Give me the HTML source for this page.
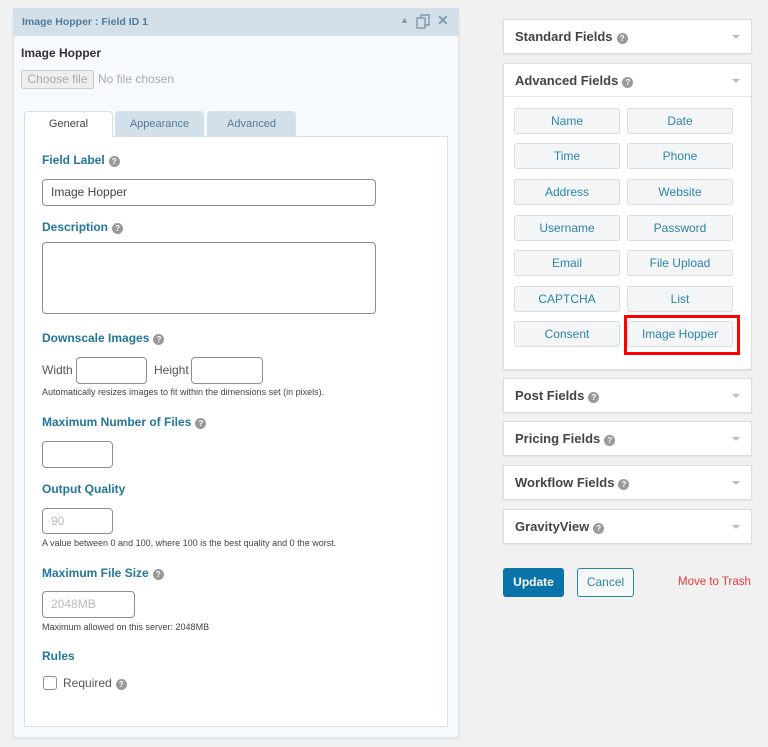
<!DOCTYPE html>
<html><head><style>
*{box-sizing:border-box;margin:0;padding:0}
body{width:768px;height:747px;background:#f1f1f1;font-family:"Liberation Sans",sans-serif;position:relative;overflow:hidden;color:#444}
.a{position:absolute}
.q{display:inline-block;width:11px;height:11px;border-radius:50%;background:#999;color:#fff;font-size:8px;line-height:11px;text-align:center;font-weight:bold;vertical-align:0px;margin-left:4px}
.lbl{position:absolute;left:42px;font-weight:bold;color:#23759b;font-size:12px}
.in{position:absolute;border:1px solid #8c8f94;border-radius:4px;background:#fff;font-size:12px;color:#444;padding-left:8px;line-height:24px}
.sm{position:absolute;left:42px;font-size:9px;color:#444}
.box{position:absolute;left:503px;width:249px;background:#fff;border:1px solid #dcdcde;box-shadow:0 1px 1px rgba(0,0,0,.06)}
.box .h{height:33px;line-height:33px;padding-left:11px;font-weight:bold;font-size:13px;color:#444;position:relative}
.box .h:after{content:"";position:absolute;right:11px;top:15px;border:4px solid transparent;border-top:4px solid #bbb}
.btn{position:absolute;width:106px;height:26px;background:#f3f5f6;border:1px solid #dcdcde;border-radius:3px;color:#2c84ad;font-size:12px;text-align:center;line-height:24px}
.tab{position:absolute;top:111px;height:26px;border:1px solid #d5e2ec;border-bottom:none;border-radius:4px 4px 0 0;background:#d3e0ea;font-size:11px;color:#537a99;text-align:center;line-height:25px}
</style></head><body>
<div class="a" style="left:13px;top:8px;width:446px;height:730px;background:#f6fafd;border:1px solid #dde4ea;box-shadow:0 1px 2px rgba(0,0,0,.08)"></div>
<div class="a" style="left:13px;top:8px;width:446px;height:28px;background:#d3dfe9"></div>
<div class="a" style="left:22px;top:16px;font-size:10.5px;font-weight:bold;color:#517b9b">Image Hopper : Field ID 1</div>
<div class="a" style="left:400px;top:15px;font-size:9px;color:#7f99ae">▲</div>
<svg class="a" style="left:416px;top:14px" width="14" height="16" viewBox="0 0 14 16"><rect x="1" y="4" width="8" height="10" fill="none" stroke="#7f99ae" stroke-width="1.4"/><path d="M5 4V1h8v10h-4" fill="none" stroke="#7f99ae" stroke-width="1.4"/></svg>
<div class="a" style="left:437px;top:12px;font-size:14px;font-weight:bold;color:#7f99ae">✕</div>
<div class="a" style="left:21px;top:46px;font-size:12px;font-weight:bold;color:#333">Image Hopper</div>
<div class="a" style="left:21px;top:70px;width:73px;height:19px;border:1px solid #ccc;border-radius:2px;background:#eee;font-size:12px;color:#aaa;text-align:center;line-height:17px">Choose file</div>
<div class="a" style="left:98px;top:72px;font-size:12px;color:#aaa">No file chosen</div>
<div class="tab" style="left:24px;width:89px;background:#fff;color:#444;height:27px">General</div>
<div class="tab" style="left:115px;width:89px">Appearance</div>
<div class="tab" style="left:207px;width:89px">Advanced</div>
<div class="a" style="left:24px;top:136px;width:424px;height:591px;background:#fff;border:1px solid #d5e2ec"></div>
<div class="a" style="left:25px;top:135px;width:87px;height:3px;background:#fff"></div>
<div class="lbl" style="top:153px">Field Label<span class="q">?</span></div>
<div class="in" style="left:42px;top:179px;width:334px;height:27px">Image Hopper</div>
<div class="lbl" style="top:220px">Description<span class="q">?</span></div>
<div class="in" style="left:42px;top:242px;width:334px;height:72px"></div>
<div class="lbl" style="top:331px">Downscale Images<span class="q">?</span></div>
<div class="a" style="left:42px;top:363px;font-size:12px;color:#555">Width</div>
<div class="in" style="left:76px;top:357px;width:71px;height:27px"></div>
<div class="a" style="left:154px;top:363px;font-size:12px;color:#555">Height</div>
<div class="in" style="left:191px;top:357px;width:72px;height:27px"></div>
<div class="sm" style="top:387px">Automatically resizes images to fit within the dimensions set (in pixels).</div>
<div class="lbl" style="top:415px">Maximum Number of Files<span class="q">?</span></div>
<div class="in" style="left:42px;top:441px;width:71px;height:27px"></div>
<div class="lbl" style="top:482px">Output Quality</div>
<div class="in" style="left:42px;top:508px;width:71px;height:26px;color:#bbb">90</div>
<div class="sm" style="top:538px">A value between 0 and 100, where 100 is the best quality and 0 the worst.</div>
<div class="lbl" style="top:566px">Maximum File Size<span class="q">?</span></div>
<div class="in" style="left:42px;top:591px;width:93px;height:27px;color:#bbb">2048MB</div>
<div class="sm" style="top:622px">Maximum allowed on this server: 2048MB</div>
<div class="lbl" style="top:649px">Rules</div>
<div class="a" style="left:43px;top:676px;width:14px;height:14px;border:1px solid #8c8f94;border-radius:3px;background:#fff"></div>
<div class="a" style="left:63px;top:676px;font-size:12px;color:#555">Required<span class="q">?</span></div>

<div class="box" style="top:19px;height:35px"><div class="h">Standard Fields<span class="q">?</span></div></div>
<div class="box" style="top:63px;height:307px"><div class="h" style="border-bottom:1px solid #e5e5e5">Advanced Fields<span class="q">?</span></div></div>
<div class="btn" style="left:514px;top:108px">Name</div><div class="btn" style="left:627px;top:108px">Date</div>
<div class="btn" style="left:514px;top:143px">Time</div><div class="btn" style="left:627px;top:143px">Phone</div>
<div class="btn" style="left:514px;top:179px">Address</div><div class="btn" style="left:627px;top:179px">Website</div>
<div class="btn" style="left:514px;top:215px">Username</div><div class="btn" style="left:627px;top:215px">Password</div>
<div class="btn" style="left:514px;top:250px">Email</div><div class="btn" style="left:627px;top:250px">File Upload</div>
<div class="btn" style="left:514px;top:286px">CAPTCHA</div><div class="btn" style="left:627px;top:286px">List</div>
<div class="btn" style="left:514px;top:321px">Consent</div><div class="btn" style="left:627px;top:321px">Image Hopper</div>
<div class="a" style="left:624px;top:315px;width:116px;height:40px;border:3px solid #f00"></div>
<div class="box" style="top:378px;height:35px"><div class="h">Post Fields<span class="q">?</span></div></div>
<div class="box" style="top:421px;height:35px"><div class="h">Pricing Fields<span class="q">?</span></div></div>
<div class="box" style="top:465px;height:35px"><div class="h">Workflow Fields<span class="q">?</span></div></div>
<div class="box" style="top:509px;height:35px"><div class="h">GravityView<span class="q">?</span></div></div>
<div class="a" style="left:503px;top:568px;width:61px;height:29px;background:#0a73aa;border-radius:3px;color:#fff;font-size:12px;font-weight:bold;text-align:center;line-height:29px">Update</div>
<div class="a" style="left:577px;top:568px;width:57px;height:29px;border:1px solid #2c84ad;border-radius:3px;color:#2c84ad;font-size:12px;text-align:center;line-height:27px;background:#f6f7f7">Cancel</div>
<div class="a" style="left:678px;top:576px;font-size:11.5px;color:#e83a3a">Move to Trash</div>
</body></html>
